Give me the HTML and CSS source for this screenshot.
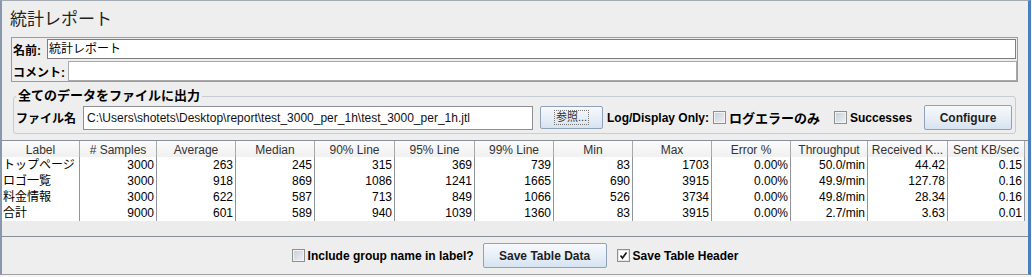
FILE: index.html
```html
<!DOCTYPE html>
<html lang="ja">
<head>
<meta charset="utf-8">
<title>統計レポート</title>
<link rel="stylesheet" href="styles.css">
</head>
<body>
<div class="frame">
  <div class="main">
    <h1 class="title">統計レポート</h1>
    <div class="namepanel">
      <div class="row">
        <span class="lbl lbl-name">名前:</span>
        <div class="field name-field">統計レポート</div>
      </div>
      <div class="row">
        <span class="lbl lbl-comment">コメント:</span>
        <div class="field comment-field"></div>
      </div>
    </div>
    <fieldset class="group">
      <legend>全てのデータをファイルに出力</legend>
      <div class="filerow">
        <span class="lbl lbl-file">ファイル名</span>
        <div class="field file-field">C:\Users\shotets\Desktop\report\test_3000_per_1h\test_3000_per_1h.jtl</div>
        <button class="btn browse"><span class="focus">参照...</span></button>
        <span class="lbl lbl-log">Log/Display Only:</span>
        <span class="check check-err"><span class="box"></span><span class="check-text">ログエラーのみ</span></span>
        <span class="check check-succ"><span class="box"></span><span class="check-text">Successes</span></span>
        <button class="btn configure">Configure</button>
      </div>
    </fieldset>
  </div>

  <div class="tablepane">
    <div class="grid">
      <div class="th">Label</div>
      <div class="th"># Samples</div>
      <div class="th">Average</div>
      <div class="th">Median</div>
      <div class="th">90% Line</div>
      <div class="th">95% Line</div>
      <div class="th">99% Line</div>
      <div class="th">Min</div>
      <div class="th">Max</div>
      <div class="th">Error %</div>
      <div class="th">Throughput</div>
      <div class="th">Received K...</div>
      <div class="th">Sent KB/sec</div>

      <div class="td lab">トップページ</div>
      <div class="td">3000</div><div class="td">263</div><div class="td">245</div><div class="td">315</div><div class="td">369</div><div class="td">739</div><div class="td">83</div><div class="td">1703</div><div class="td">0.00%</div><div class="td">50.0/min</div><div class="td">44.42</div><div class="td">0.15</div>

      <div class="td lab">ロゴ一覧</div>
      <div class="td">3000</div><div class="td">918</div><div class="td">869</div><div class="td">1086</div><div class="td">1241</div><div class="td">1665</div><div class="td">690</div><div class="td">3915</div><div class="td">0.00%</div><div class="td">49.9/min</div><div class="td">127.78</div><div class="td">0.16</div>

      <div class="td lab">料金情報</div>
      <div class="td">3000</div><div class="td">622</div><div class="td">587</div><div class="td">713</div><div class="td">849</div><div class="td">1066</div><div class="td">526</div><div class="td">3734</div><div class="td">0.00%</div><div class="td">49.8/min</div><div class="td">28.34</div><div class="td">0.16</div>

      <div class="td lab">合計</div>
      <div class="td">9000</div><div class="td">601</div><div class="td">589</div><div class="td">940</div><div class="td">1039</div><div class="td">1360</div><div class="td">83</div><div class="td">3915</div><div class="td">0.00%</div><div class="td">2.7/min</div><div class="td">3.63</div><div class="td">0.01</div>
    </div>
  </div>

  <div class="bottom">
    <span class="check"><span class="box"></span><span class="check-text">Include group name in label?</span></span>
    <button class="btn savedata">Save Table Data</button>
    <span class="check"><span class="box checked"><svg width="11" height="11" viewBox="0 0 11 11"><path d="M2.5 5.5 L4.5 8 L8.5 2.5" fill="none" stroke="#1a1a1a" stroke-width="1.7"/></svg></span><span class="check-text">Save Table Header</span></span>
  </div>
</div>
</body>
</html>
```

FILE: styles.css
```css
* { box-sizing: border-box; }

html, body { margin: 0; padding: 0; }

body {
  width: 1032px;
  height: 277px;
  overflow: hidden;
  background: #f6f6f6;
  font-family: "Liberation Sans", "Noto Sans CJK JP", sans-serif;
  font-size: 12px;
  color: #000;
}

.frame {
  width: 1031px;
  height: 275px;
  background: #eeeeee;
  border-top: 1px solid #a3aab3;
  border-left: 2px solid #8797ad;
  border-right: 3px solid #4681bb;
  border-bottom: 1px solid #a0a0a0;
  display: flex;
  flex-direction: column;
}

.main { padding: 9px 10px 0 8px; }

.title {
  margin: 0;
  font-size: 17px;
  font-weight: normal;
  line-height: 20px;
  color: #222;
}

.namepanel {
  margin: 7px 0 0 1px;
  border: 1px solid #9c9c9c;
  padding: 1px 1px 0 1px;
  display: flex;
  flex-direction: column;
  gap: 2px;
}

.row {
  display: flex;
  align-items: center;
  height: 20px;
}

.lbl {
  font-weight: bold;
  white-space: nowrap;
  flex: none;
}
.lbl-name { width: 34px; font-size: 12px; }
.lbl-comment { width: 55px; font-size: 12px; }

.field {
  flex: 1;
  height: 20px;
  background: #fff;
  border: 1px solid #7e7e7e;
  white-space: nowrap;
  overflow: hidden;
}
.name-field { padding-left: 1px; line-height: 18px; }
.comment-field { border-color: #a8a8a8; margin-right: -1px; }

.group {
  margin: 6px 2px 0 3px;
  padding: 0 1px 3px 2px;
  border: 1px solid #c6cdd4;
  border-radius: 3px;
  min-width: 0;
}
.group legend {
  margin-left: 0;
  padding: 0 2px;
  font-size: 13px;
  font-weight: bold;
  line-height: 16px;
}

.filerow {
  display: flex;
  align-items: center;
  height: 25px;
  margin-top: 1px;
}
.lbl-file { width: 67px; }
.file-field {
  flex: none;
  width: 450px;
  height: 24px;
  line-height: 22px;
  padding-left: 3px;
  border-color: #8c9096;
  color: #111;
}

.btn {
  font-family: inherit;
  font-size: 12px;
  font-weight: bold;
  color: #1e1e1e;
  height: 25px;
  padding: 0;
  border: 1px solid #8ea2b9;
  border-radius: 2px;
  background: linear-gradient(#f7f9fc, #e8eff7 50%, #d6e3f1);
  flex: none;
}
.browse {
  width: 63px;
  height: 23px;
  margin-left: 7px;
  font-size: 11px;
  font-weight: normal;
  color: #333;
}
.focus {
  display: inline-block;
  border: 1px dotted #777;
  padding: 0 1px;
  line-height: 13px;
}
.lbl-log { width: 106px; margin-left: 4px; }
.configure { width: 88px; }

.check {
  display: inline-flex;
  align-items: center;
  flex: none;
  font-weight: bold;
  white-space: nowrap;
}
.check-err { width: 121px; font-size: 13px; }
.check-succ { width: 90px; }
.box {
  width: 13px;
  height: 13px;
  border: 1px solid #8e8f8f;
  background: linear-gradient(135deg, #c6ced8, #eef2f6);
  box-shadow: inset 0 0 0 1px #f3f3f3;
  margin-right: 3px;
  display: inline-flex;
  align-items: center;
  justify-content: center;
  flex: none;
}
.box.checked { background: #fff; box-shadow: inset 0 0 0 1px #e6e6e6; }

.tablepane {
  margin-top: 6px;
  height: 97px;
  border-top: 1px solid #8a8f96;
  border-bottom: 1px solid #8a8f96;
  background: #ececec;
}

.grid {
  display: grid;
  grid-template-columns: 78px 77px 79px 79px 80px 80px 79px 79px 79px 79px 77px 80px 77px;
  grid-auto-rows: 16px;
}

.th {
  height: 20px;
  line-height: 19px;
  text-align: center;
  color: #333;
  background: linear-gradient(#fbfbfb, #eeeeee);
  border-right: 1px solid #a9a9a9;
  border-bottom: 1px solid #8f8f8f;
  white-space: nowrap;
  overflow: hidden;
}

.td {
  height: 16px;
  line-height: 16px;
  background: #fff;
  text-align: right;
  padding-right: 2px;
  border-right: 1px solid #8e979f;
  white-space: nowrap;
  overflow: hidden;
}
.td.lab { text-align: left; padding-left: 1px; padding-right: 0; }

.bottom {
  height: 37px;
  display: flex;
  justify-content: center;
  align-items: center;
  gap: 9px;
}
.savedata { width: 124px; margin-right: 1px; }
```
